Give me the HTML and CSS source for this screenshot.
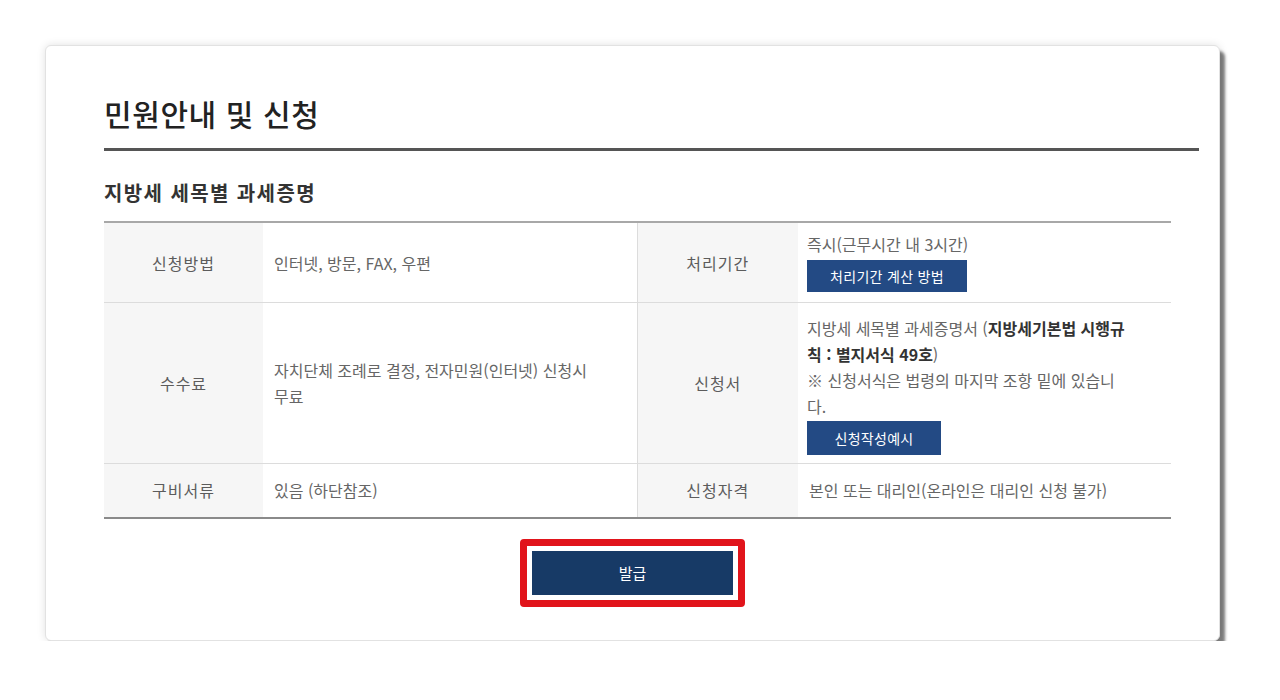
FILE: index.html
```html
<!DOCTYPE html>
<html lang="ko">
<head>
<meta charset="utf-8">
<title>민원안내 및 신청</title>
<link rel="stylesheet" href="styles.css">
</head>
<body>
<div class="card">
  <h1 class="title">민원안내 및 신청</h1>
  <h2 class="subtitle">지방세 세목별 과세증명</h2>
  <table class="info">
    <colgroup>
      <col class="c-th"><col class="c-td1"><col class="c-th2"><col class="c-td2">
    </colgroup>
    <tr class="r1">
      <th>신청방법</th>
      <td>인터넷, 방문, FAX, 우편</td>
      <th class="th2">처리기간</th>
      <td class="stack">
        <div class="line">즉시(근무시간 내 3시간)</div>
        <span class="sbtn sbtn-a">처리기간 계산 방법</span>
      </td>
    </tr>
    <tr class="r2">
      <th>수수료</th>
      <td>자치단체 조례로 결정, 전자민원(인터넷) 신청시<br>무료</td>
      <th class="th2">신청서</th>
      <td class="stack">
        <div class="line">지방세 세목별 과세증명서 (<b>지방세기본법 시행규</b><br><b>칙 : 별지서식 49호</b>)</div>
        <div class="line">※ 신청서식은 법령의 마지막 조항 밑에 있습니<br>다.</div>
        <span class="sbtn sbtn-b">신청작성예시</span>
      </td>
    </tr>
    <tr class="r3">
      <th>구비서류</th>
      <td>있음 (하단참조)</td>
      <th class="th2">신청자격</th>
      <td>본인 또는 대리인(온라인은 대리인 신청 불가)</td>
    </tr>
  </table>
  <div class="actions">
    <div class="highlight">
      <button class="issue" type="button">발급</button>
    </div>
  </div>
</div>
</body>
</html>
```

FILE: styles.css
```css
html, body {
  margin: 0;
  padding: 0;
  background: #ffffff;
}
body {
  font-family: "Noto Sans CJK KR", "Noto Sans", "Liberation Sans", sans-serif;
  color: #555;
}
.card {
  margin: 45px 0 0 45px;
  width: 1175px;
  box-sizing: border-box;
  padding: 47px 20px 33px 58px;
  background: #fff;
  border: 1px solid #e2e2e2;
  border-radius: 6px;
  box-shadow: 0 0 8px rgba(0,0,0,0.12), 5px 6px 3px rgba(0,0,0,0.5);
}
.title {
  margin: 0;
  font-size: 30px;
  line-height: 40px;
  font-weight: 500;
  color: #222;
  letter-spacing: 0.6px;
  padding-bottom: 15px;
  border-bottom: 3px solid #555;
}
.subtitle {
  margin: 28px 0 14px 0;
  font-size: 20px;
  line-height: 28px;
  font-weight: 700;
  color: #333;
  letter-spacing: 1.4px;
}
.info {
  width: 1067px;
  border-collapse: collapse;
  border-top: 2px solid #a8a8a8;
  border-bottom: 2px solid #8a8a8a;
  font-size: 16px;
  line-height: 26px;
}
.c-th { width: 159px; }
.c-td1 { width: 374px; }
.c-th2 { width: 161px; }
.c-td2 { width: 373px; }
.info tr { border-top: 1px solid #dcdcdc; }
.info tr:first-child { border-top: none; }
.r1 { height: 79px; }
.r2 { height: 160px; }
.r3 { height: 54px; }
.info th {
  background: #f6f6f6;
  font-weight: 400;
  color: #5c5c5c;
  text-align: center;
  vertical-align: middle;
  padding: 0;
  letter-spacing: 1px;
}
.info td {
  padding: 0 10px 0 11px;
  vertical-align: middle;
  color: #666;
}
.info th.th2 { border-left: 1px solid #dcdcdc; }
.info td.stack { padding-left: 9px; }
.r1 td.stack { padding-top: 8px; padding-bottom: 10px; }
.r2 td.stack { padding-top: 12px; padding-bottom: 8px; }
.info b { font-weight: 700; color: #333; }
.line { display: block; }
.sbtn {
  display: inline-flex;
  align-items: center;
  justify-content: center;
  box-sizing: border-box;
  min-width: 134px;
  padding: 0 16px;
  background: #234a84;
  color: #fff;
  font-size: 14px;
  letter-spacing: 0.3px;
}
.sbtn-a { height: 32px; margin-top: 3px; width: 160px; }
.sbtn-b { height: 34px; margin-top: 2px; }
.actions {
  display: flex;
  justify-content: center;
  margin-top: 20px;
  padding-right: 38px;
}
.highlight {
  border: 7px solid #e1141b;
  border-radius: 4px;
  padding: 5px;
  background: #fff;
}
.issue {
  display: block;
  width: 201px;
  height: 44px;
  border: none;
  background: #173a66;
  color: #fff;
  font-family: "Noto Sans CJK KR", "Noto Sans", sans-serif;
  font-size: 15px;
  padding: 0;
  cursor: pointer;
}
```
